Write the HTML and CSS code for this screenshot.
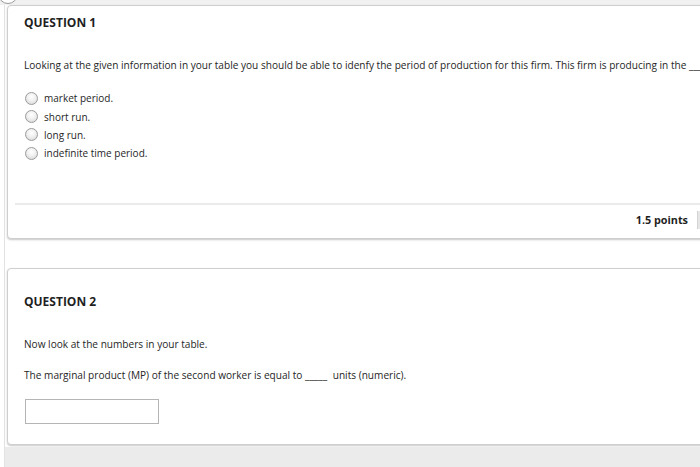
FILE: index.html
```html
<!DOCTYPE html>
<html lang="en">
<head>
<meta charset="utf-8">
<title>Quiz</title>
<link rel="stylesheet" href="styles.css">
</head>
<body>
<div class="topbar">
  <svg class="topbar-circle" width="24" height="5" viewBox="0 0 24 5"><circle cx="8" cy="-6" r="9.5" fill="#fff" stroke="#9a9a9a" stroke-width="1"/></svg>
</div>
<div class="page">
  <section class="card">
    <div class="card-body">
      <h2 class="q-title">QUESTION 1</h2>
      <p class="q-text">Looking at the given information in your table you should be able to idenfy the period of production for this firm. This firm is producing in the ___</p>
      <ul class="options">
        <li class="option"><span class="radio"></span><span class="opt-label">market period.</span></li>
        <li class="option"><span class="radio"></span><span class="opt-label">short run.</span></li>
        <li class="option"><span class="radio"></span><span class="opt-label">long run.</span></li>
        <li class="option"><span class="radio"></span><span class="opt-label">indefinite time period.</span></li>
      </ul>
    </div>
    <div class="card-foot">
      <span class="points">1.5 points</span>
      <span class="foot-btn"></span>
    </div>
  </section>

  <section class="card card-2">
    <div class="card-body body-2">
      <h2 class="q-title">QUESTION 2</h2>
      <p class="q-text q2-first">Now look at the numbers in your table.</p>
      <p class="q-text q2-second">The marginal product (MP) of the second worker is equal to <span class="blank">_____</span> units (numeric).</p>
      <input class="answer" type="text" aria-label="answer">
    </div>
  </section>
  <div class="bottom-area"></div>
</div>
</body>
</html>
```

FILE: styles.css
```css
html, body {
  margin: 0;
  padding: 0;
  overflow: hidden;
  background: #ffffff;
}

body {
  font-family: "Open Sans", "Liberation Sans", sans-serif;
  color: #2b2b2b;
  width: 700px;
  height: 467px;
}

.topbar {
  height: 5px;
  background: #f1f1f1;
  overflow: hidden;
  display: flex;
}

.topbar-circle {
  display: block;
  flex: none;
}

.page {
  margin-left: 4px;
  border-left: 1px solid #e2e2e2;
  padding-left: 2px;
  width: 760px;
}

.card {
  width: 720px;
  border: 1px solid #cfcfcf;
  border-radius: 4px;
  background: #ffffff;
  box-shadow: 0 1px 2px rgba(0, 0, 0, 0.22);
}

.card-2 {
  margin-top: 29px;
}

.card-body {
  padding: 9px 16px 0 16px;
}

.body-2 {
  padding-top: 25px;
  padding-bottom: 20px;
}

.q-title {
  margin: 0;
  font-size: 12px;
  line-height: 16px;
  font-weight: 700;
  color: #1f1f1f;
}

.q-text {
  margin: 27px 0 0 0;
  font-size: 10.1px;
  line-height: 14px;
  color: #262626;
  white-space: nowrap;
}

.q2-second {
  margin-top: 17px;
}

.blank {
  display: inline-block;
  margin-right: 3px;
}

.options {
  list-style: none;
  margin: 17px 0 0 0;
  padding: 0;
}

.option {
  display: flex;
  align-items: center;
  height: 18.4px;
  font-size: 10px;
  color: #262626;
}

.radio {
  flex: none;
  width: 11px;
  height: 11px;
  margin-left: 1px;
  border: 1px solid #9b9b9b;
  border-radius: 50%;
  background: radial-gradient(circle at 50% 35%, #ffffff 0%, #f0f0f0 45%, #d2d2d2 100%);
  margin-right: 6px;
}

.opt-label {
  line-height: 14px;
}

.card-foot {
  margin: 40px 0 0 7px;
  border-top: 2px solid #ebebeb;
  padding: 6px 10px 9px 0;
  display: flex;
  justify-content: flex-end;
  align-items: center;
}

.points {
  font-size: 10.8px;
  line-height: 16px;
  font-weight: 700;
  color: #1f1f1f;
}

.foot-btn {
  width: 20px;
  height: 18px;
  margin-left: 9px;
  background: #e6e6e6;
  border-left: 1px solid #d4d4d4;
}

.answer {
  display: block;
  margin: 17px 0 0 1px;
  width: 134px;
  height: 25px;
  box-sizing: border-box;
  border: 1px solid #b5b5b5;
  border-radius: 0;
  background: #fff;
  padding: 0;
}

.bottom-area {
  margin-top: 2px;
  height: 30px;
  background: #ebebeb;
  margin-left: -2px;
}
```
